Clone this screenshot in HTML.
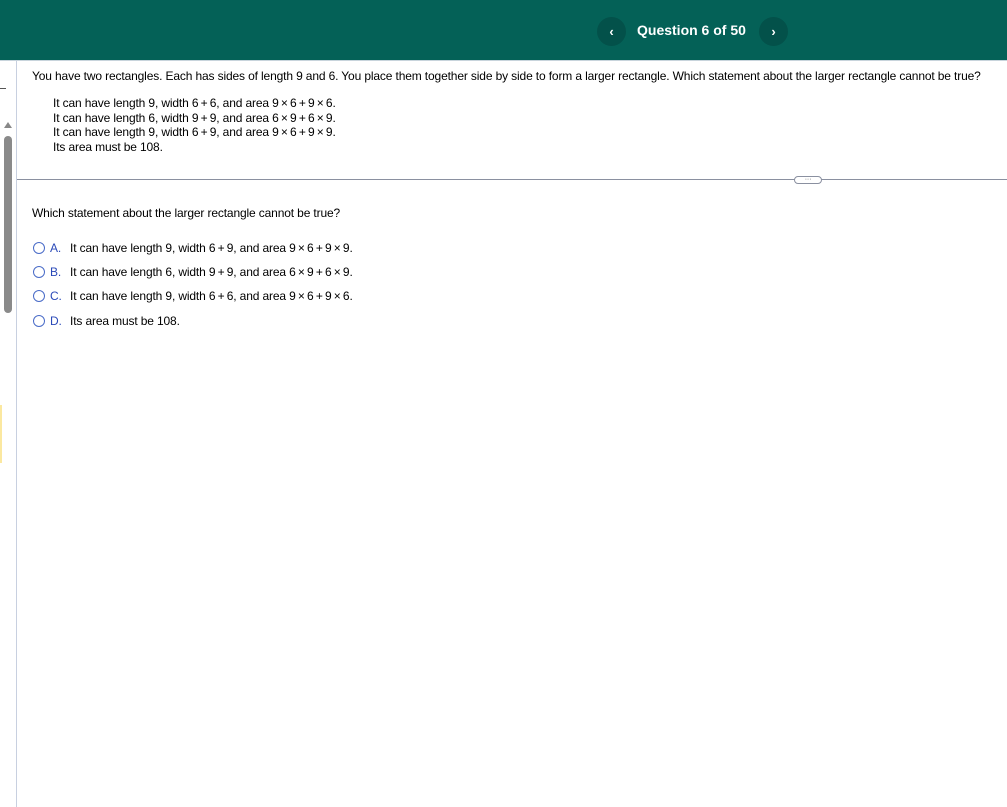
<!DOCTYPE html>
<html><head><style>
body{margin:0;width:1007px;height:807px;position:relative;background:#fff;font-family:"Liberation Sans",Arial,sans-serif;font-size:12px;letter-spacing:-0.14px;color:#000;overflow:hidden}
.hdr{position:absolute;left:0;top:0;width:1007px;height:60px;background:#046157;border-bottom:1px solid #c8d4dc}
.nav{position:absolute;top:17px;width:29px;height:29px;border-radius:50%;background:#03514a;color:#fff;text-align:center;line-height:29px;font-size:13px;font-weight:bold}
.title{position:absolute;left:637px;top:22px;color:#fff;font-weight:bold;font-size:14px;letter-spacing:0}
.side{position:absolute;left:16px;top:61px;width:1px;height:746px;background:#c8d0e0}
.t{position:absolute;white-space:nowrap}
.opt{position:absolute;left:33px;white-space:nowrap}
.rad{display:inline-block;width:10px;height:10px;border:1px solid #4a6cc8;border-radius:50%;vertical-align:-2px;margin-right:5px}
.lt{color:#2a49b8;display:inline-block;width:20px}
</style></head><body>
<div class="hdr">
<div class="nav" style="left:597px">‹</div>
<div class="title">Question 6 of 50</div>
<div class="nav" style="left:759px">›</div>
</div>
<div class="side"></div>
<div style="position:absolute;left:0;top:88px;width:6px;height:1px;background:#555"></div>
<div style="position:absolute;left:4px;top:122px;width:0;height:0;border-left:4px solid transparent;border-right:4px solid transparent;border-bottom:6px solid #888"></div>
<div style="position:absolute;left:4px;top:136px;width:8px;height:177px;border-radius:4px;background:#8a8a8a"></div>
<div style="position:absolute;left:0;top:405px;width:2px;height:58px;background:#fbe8a0"></div>
<div class="t" style="left:32px;top:69px">You have two rectangles. Each has sides of length 9 and 6. You place them together side by side to form a larger rectangle. Which statement about the larger rectangle cannot be true?</div>
<div class="t" style="left:53px;top:96px;line-height:14.7px">It can have length 9, width 6&thinsp;+&thinsp;6, and area 9&thinsp;×&thinsp;6&thinsp;+&thinsp;9&thinsp;×&thinsp;6.<br>It can have length 6, width 9&thinsp;+&thinsp;9, and area 6&thinsp;×&thinsp;9&thinsp;+&thinsp;6&thinsp;×&thinsp;9.<br>It can have length 9, width 6&thinsp;+&thinsp;9, and area 9&thinsp;×&thinsp;6&thinsp;+&thinsp;9&thinsp;×&thinsp;9.<br>Its area must be 108.</div>
<div style="position:absolute;left:17px;top:179px;width:990px;height:1px;background:#8a90a0"></div>
<div style="position:absolute;left:794px;top:176px;width:26px;height:6px;border:1px solid #8a90a0;border-radius:4px;background:#fff;font-size:7px;line-height:5px;text-align:center;color:#555">···</div>
<div class="t" style="left:32px;top:206px">Which statement about the larger rectangle cannot be true?</div>
<div class="opt" style="top:241px"><span class="rad"></span><span class="lt">A.</span>It can have length 9, width 6&thinsp;+&thinsp;9, and area 9&thinsp;×&thinsp;6&thinsp;+&thinsp;9&thinsp;×&thinsp;9.</div>
<div class="opt" style="top:265px"><span class="rad"></span><span class="lt">B.</span>It can have length 6, width 9&thinsp;+&thinsp;9, and area 6&thinsp;×&thinsp;9&thinsp;+&thinsp;6&thinsp;×&thinsp;9.</div>
<div class="opt" style="top:289px"><span class="rad"></span><span class="lt">C.</span>It can have length 9, width 6&thinsp;+&thinsp;6, and area 9&thinsp;×&thinsp;6&thinsp;+&thinsp;9&thinsp;×&thinsp;6.</div>
<div class="opt" style="top:314px"><span class="rad"></span><span class="lt">D.</span>Its area must be 108.</div>
</body></html>
